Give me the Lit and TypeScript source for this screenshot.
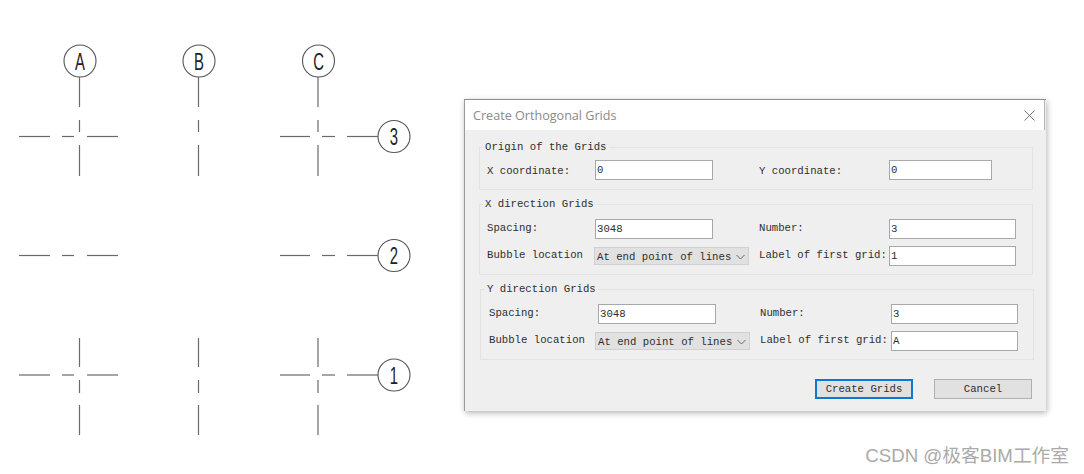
import { LitElement, css, html, svg } from 'lit';
import { customElement } from 'lit/decorators.js';

const columns = [
  { x: 79.5, tag: 'A' },
  { x: 198.5, tag: 'B' },
  { x: 318, tag: 'C' },
];

// the two vertical runs of dashes, at the top and bottom row of the plan
const vRuns = [
  [[77, 107], [120, 132], [145, 176]],
  [[338, 367], [380, 393], [405, 435]],
];

const hRuns = [
  { y: 136.5, tag: '3', spans: [[19, 50], [62, 74], [87, 118]], right: [[280, 310], [322, 335], [347, 378]] },
  { y: 255.5, tag: '2', spans: [[19, 50], [62, 74], [87, 118]], right: [[280, 310], [322, 335], [347, 378]] },
  { y: 375, tag: '1', spans: [[19, 50], [62, 74], [87, 118]], right: [[280, 310], [322, 335], [347, 378]] },
];

function bubble(cx: number, cy: number, label: string) {
  return svg`
    <circle class="ring" cx=${cx} cy=${cy} r="16"></circle>
    <text class="tag" transform="translate(${cx} ${cy + 8.5}) scale(0.62 1)">${label}</text>
  `;
}

@customElement('app-root')
export class AppRoot extends LitElement {
  static styles = css`
    :host {
      display: flex;
      width: 1084px;
      height: 474px;
      position: relative;
      background: #fff;
      overflow: hidden;
      font-family: 'Liberation Mono', monospace;
      font-size: 10.67px;
      color: #2e2e2e;
    }
    .plan {
      flex: none;
      width: 464px;
      height: 474px;
    }
    .plan line {
      stroke: #6a6a6a;
      stroke-width: 1.2;
    }
    .ring {
      fill: #fff;
      stroke: #555;
      stroke-width: 1.1;
    }
    .tag {
      font-family: 'Liberation Sans', sans-serif;
      font-size: 24px;
      text-anchor: middle;
      fill: #222;
    }
    .dialog {
      flex: none;
      align-self: flex-start;
      width: 582px;
      height: 312px;
      margin-top: 99px;
      background: #efefef;
      box-shadow: 1px 2px 6px rgba(0, 0, 0, 0.3);
      border-top: 1px solid #8f8f8f;
      box-sizing: border-box;
    }
    .title {
      display: flex;
      align-items: center;
      justify-content: space-between;
      height: 30px;
      box-sizing: border-box;
      padding: 0 9px 0 8px;
      margin-right: 1px;
      background: #fff;
      border-left: 1px solid #9a9a9a;
      border-right: 1px solid #b5b5b5;
      font-family: 'Open Sans', sans-serif;
      font-size: 12.6px;
      color: #8a8a8a;
    }
    .close {
      width: 11px;
      height: 11px;
    }
    .close path {
      stroke: #666;
      stroke-width: 0.9;
      fill: none;
    }
    .body {
      display: flex;
      flex-direction: column;
      height: 281px;
      box-sizing: border-box;
      padding: 10px 14px 0 14px;
      border-left: 1px solid #9a9a9a;
    }
    fieldset {
      margin: 0 0 7px;
      padding: 6px 0 9px var(--pad, 7px);
      width: 554px;
      box-sizing: border-box;
      border: 1px solid #e3e3e3;
      min-width: 0;
    }
    fieldset.spaced {
      padding-top: 8px;
      padding-bottom: 8px;
    }
    fieldset.nudged {
      --pad: 8px;
      --label-a: 109px;
      --cell: 271px;
      --label-b: 131px;
      --select-shift: -3px;
      margin-left: 1px;
    }
    legend {
      padding: 0 2px;
      margin-left: -4px;
      line-height: 14px;
    }
    .row {
      display: flex;
      align-items: center;
      height: 20px;
    }
    .row + .row {
      margin-top: 7px;
    }
    .cell {
      flex: none;
      display: flex;
      align-items: center;
      width: var(--cell, 272px);
    }
    .label-a,
    .label-b {
      flex: none;
      margin-top: -2px;
      white-space: nowrap;
    }
    .label-a {
      width: var(--label-a, 108px);
    }
    .label-b {
      width: var(--label-b, 130px);
    }
    .origin .label-a,
    .origin .label-b {
      margin-top: 1px;
    }
    input {
      height: 20px;
      box-sizing: border-box;
      border: 1px solid #a8a8a8;
      background: #fff;
      padding: 0 1px 1px;
      margin: 0;
      font: inherit;
      color: #2e2e2e;
      outline: none;
    }
    .w118 {
      width: 118px;
    }
    .w103 {
      width: 103px;
    }
    .w127 {
      width: 127px;
    }
    .select {
      flex: none;
      align-self: flex-start;
      display: flex;
      align-items: center;
      justify-content: space-between;
      width: 155px;
      height: 18px;
      margin-left: var(--select-shift, -1px);
      box-sizing: border-box;
      padding: 1px 3px 0 2px;
      background: #e1e1e1;
      border: 1px solid #d0d0d0;
      overflow: hidden;
      white-space: nowrap;
    }
    .select svg {
      flex: none;
      width: 9px;
      height: 6px;
      margin-left: 2px;
    }
    .select path {
      stroke: #666;
      fill: none;
    }
    .actions {
      display: flex;
      justify-content: flex-end;
      gap: 21px;
      margin-top: 12px;
    }
    button {
      width: 98px;
      height: 20px;
      padding: 0;
      box-sizing: border-box;
      background: #e1e1e1;
      border: 1px solid #b0b0b0;
      font: inherit;
      color: #2e2e2e;
    }
    button.primary {
      border: 2px solid #0a78d4;
    }
    .mark {
      position: absolute;
      right: 15px;
      bottom: 7px;
      font-family: 'Liberation Sans', 'Noto Sans CJK SC', sans-serif;
      font-size: 18.7px;
      line-height: 22px;
      color: #aaa;
      white-space: nowrap;
    }
  `;

  private renderPlan() {
    return html`
      <svg class="plan" viewBox="0 0 464 474">
        ${columns.map(
          (c) => svg`
            ${vRuns.flat().map(([a, b]) => svg`<line x1=${c.x} x2=${c.x} y1=${a} y2=${b}></line>`)}
            ${bubble(c.x + 0.5, 61, c.tag)}
          `
        )}
        ${hRuns.map(
          (r) => svg`
            ${[...r.spans, ...r.right].map(([a, b]) => svg`<line x1=${a} x2=${b} y1=${r.y} y2=${r.y}></line>`)}
            ${bubble(394, r.y, r.tag)}
          `
        )}
      </svg>
    `;
  }

  private renderSelect() {
    return html`
      <div class="select">
        <span>At end point of lines</span>
        <svg viewBox="0 0 9 6"><path d="M0.5 1 L4.5 5 L8.5 1"></path></svg>
      </div>
    `;
  }

  private renderGridGroup(title: string, labelFirst: string, nudged: boolean) {
    return html`
      <fieldset class="spaced ${nudged ? 'nudged' : ''}">
        <legend>${title}</legend>
        <div class="row">
          <div class="cell">
            <span class="label-a">Spacing:</span>
            <input class="w118" value="3048" />
          </div>
          <span class="label-b">Number:</span>
          <input class="w127" value="3" />
        </div>
        <div class="row">
          <div class="cell">
            <span class="label-a">Bubble location</span>
            ${this.renderSelect()}
          </div>
          <span class="label-b">Label of first grid:</span>
          <input class="w127" value=${labelFirst} />
        </div>
      </fieldset>
    `;
  }

  render() {
    return html`
      ${this.renderPlan()}
      <div class="dialog">
        <div class="title">
          <span>Create Orthogonal Grids</span>
          <svg class="close" viewBox="0 0 11 11"><path d="M0.5 0.5 L10.5 10.5 M10.5 0.5 L0.5 10.5"></path></svg>
        </div>
        <div class="body">
          <fieldset class="origin">
            <legend>Origin of the Grids</legend>
            <div class="row">
              <div class="cell">
                <span class="label-a">X coordinate:</span>
                <input class="w118" value="0" />
              </div>
              <span class="label-b">Y coordinate:</span>
              <input class="w103" value="0" />
            </div>
          </fieldset>
          ${this.renderGridGroup('X direction Grids', '1', false)}
          ${this.renderGridGroup('Y direction Grids', 'A', true)}
          <div class="actions">
            <button class="primary">Create Grids</button>
            <button>Cancel</button>
          </div>
        </div>
      </div>
      <div class="mark">CSDN @极客BIM工作室</div>
    `;
  }
}
